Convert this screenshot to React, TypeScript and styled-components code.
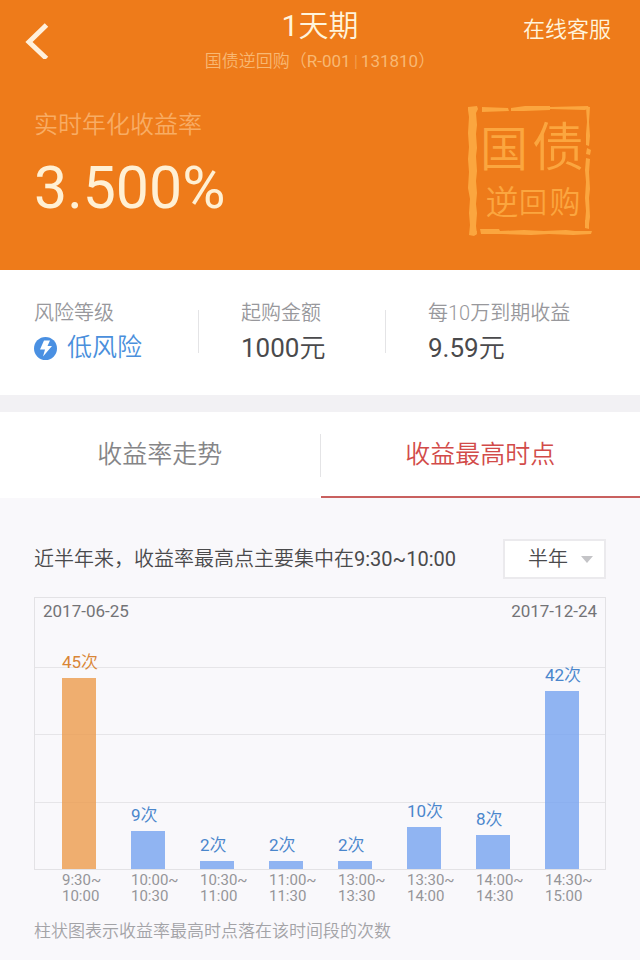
import React, { useState } from "react";
import styled, { createGlobalStyle } from "styled-components";

const GlobalStyle = createGlobalStyle`
  * {
    box-sizing: border-box;
  }
  body {
    margin: 0;
    background-color: #f9f8fb;
    font-family: Roboto, "Noto Sans CJK SC DemiLight", "Noto Sans CJK SC", sans-serif;
    color: #4a4a4c;
  }
  button, select {
    font-family: inherit;
  }
`;

const Hero = styled.header`
  background-color: #ee7b1a;
  padding: 5px 34px 33px;
`;

const NavBar = styled.div`
  display: grid;
  grid-template-columns: 1fr auto 1fr;
  align-items: center;
`;

const BackButton = styled.button`
  justify-self: start;
  margin-left: -12px;
  padding: 0;
  border: none;
  background: none;
  line-height: 0;
  cursor: pointer;
`;

const TitleBlock = styled.div`
  text-align: center;
`;

const MainTitle = styled.h1`
  margin: 0;
  font-size: 30px;
  line-height: 42px;
  font-weight: 400;
  color: #fff4dc;
`;

const ProductCode = styled.p`
  margin: 0;
  font-size: 17px;
  line-height: 28px;
  color: #f8b873;
`;

const CodeSeparator = styled.span`
  padding: 0 3px;
  color: #f39a48;
`;

const ServiceLink = styled.a`
  justify-self: end;
  align-self: start;
  margin-right: -5px;
  padding-top: 9px;
  font-size: 22px;
  line-height: 32px;
  color: #fff4dc;
  text-decoration: none;
`;

const RateRow = styled.div`
  display: flex;
  justify-content: space-between;
  align-items: flex-start;
  padding-top: 31px;
`;

const RateLabel = styled.div`
  margin-top: 2px;
  font-size: 24px;
  line-height: 34px;
  font-weight: 350;
  color: #f8ac64;
`;

const RateValue = styled.div`
  font-size: 59px;
  line-height: 92px;
  color: #fff0d4;
`;

const StampImage = styled.svg`
  flex: none;
  margin-right: 14px;
  font-family: "Noto Sans CJK SC", sans-serif;
  font-weight: 350;
`;

const Stats = styled.section`
  display: grid;
  grid-template-columns: 198fr 187fr 255fr;
  padding: 26px 0 29px;
  background-color: #fff;
`;

const Stat = styled.div<{ first?: boolean }>`
  display: flex;
  align-items: center;
  gap: 42px;
  padding-left: ${props => (props.first ? '34px' : '0')};
`;

const Divider = styled.span`
  flex: none;
  width: 1px;
  height: 43px;
  background-color: #e4e4e6;
`;

const StatLabel = styled.div`
  font-size: 20px;
  line-height: 34px;
  font-weight: 350;
  color: #98989c;
  white-space: nowrap;
`;

const StatValue = styled.div<{ highlight?: boolean }>`
  display: flex;
  align-items: center;
  gap: 10px;
  font-size: ${props => (props.highlight ? '25px' : '26px')};
  line-height: 36px;
  color: ${props => (props.highlight ? '#4a8fdc' : '#4a4a4c')};
  font-weight: ${props => (props.highlight ? 350 : 400)};
`;

const Tabs = styled.div`
  display: flex;
  align-items: center;
  margin-top: 17px;
  background-color: #fff;
  box-shadow: 0 -17px 0 #f2f1f4;
`;

const Tab = styled.button<{ active: boolean }>`
  flex: 1;
  height: 86px;
  padding: 0 0 4px;
  border: none;
  border-bottom: 2px solid ${props => (props.active ? '#c9605f' : '#fff')};
  background: none;
  font-size: 25px;
  font-weight: 350;
  color: ${props => (props.active ? '#d24b49' : '#858587')};
  cursor: pointer;
`;

const Panel = styled.main`
  padding: 41px 34px 16px;
`;

const PanelHeader = styled.div`
  display: flex;
  justify-content: space-between;
  align-items: center;
  margin-bottom: 18px;
`;

const Summary = styled.p`
  margin: 0;
  font-size: 20px;
  line-height: 30px;
`;

const RangeField = styled.label`
  display: grid;
  flex: none;
  width: 103px;
  height: 40px;
  align-items: center;

  & > * {
    grid-area: 1 / 1;
  }
`;

const RangeSelect = styled.select`
  width: 100%;
  height: 100%;
  padding: 0 0 0 23px;
  appearance: none;
  border: 2px solid #ebeaed;
  border-radius: 0;
  background-color: #fff;
  font-size: 20px;
  font-weight: 350;
  color: #4a4a4c;
`;

const Caret = styled.svg`
  justify-self: end;
  margin-right: 13px;
  pointer-events: none;
`;

const Plot = styled.div`
  display: grid;
  height: 273px;
  border: 1px solid #e3e2e5;

  & > * {
    grid-area: 1 / 1;
  }
`;

const GridLines = styled.div`
  display: grid;
  grid-template-rows: 35fr 34fr 34fr 33fr;
`;

const GridBand = styled.div`
  border-bottom: 1px solid #e6e5e8;

  &:last-child {
    border-bottom: none;
  }
`;

const DateRange = styled.div`
  display: flex;
  justify-content: space-between;
  padding: 0 8px;
  font-size: 17px;
  line-height: 26px;
  color: #737376;
`;

const Bars = styled.div`
  display: flex;
  justify-content: space-between;
  padding: 0 26px 0 27px;
`;

const BarColumn = styled.div`
  display: flex;
  flex-direction: column;
  justify-content: flex-end;
  width: 34px;
  white-space: nowrap;
`;

const BarCount = styled.span<{ peak: boolean }>`
  padding-bottom: 4px;
  font-size: 17px;
  line-height: 24px;
  color: ${props => (props.peak ? '#d98636' : '#4a86cc')};
`;

const Bar = styled.div<{ peak: boolean }>`
  flex: none;
  background-color: ${props => (props.peak ? 'rgba(236, 155, 76, 0.8)' : 'rgba(117, 163, 240, 0.8)')};
`;

const Ticks = styled.div`
  display: flex;
  justify-content: space-between;
  padding: 2px 27px 0 28px;
`;

const Tick = styled.span`
  width: 34px;
  font-size: 15px;
  line-height: 16px;
  color: #959599;
  white-space: nowrap;
`;

const Footnote = styled.p`
  margin: 14px 0 0;
  font-size: 17px;
  line-height: 26px;
  font-weight: 350;
  color: #a3a3a7;
`;

// Number of counts covered by the full height of the plot
const SCALE_MAX = 64;

const slots = [
  { from: '9:30', to: '10:00', count: 45 },
  { from: '10:00', to: '10:30', count: 9 },
  { from: '10:30', to: '11:00', count: 2 },
  { from: '11:00', to: '11:30', count: 2 },
  { from: '13:00', to: '13:30', count: 2 },
  { from: '13:30', to: '14:00', count: 10 },
  { from: '14:00', to: '14:30', count: 8 },
  { from: '14:30', to: '15:00', count: 42 },
];

const tabs = ['收益率走势', '收益最高时点'];

// Seal with a rough, hand-cut frame
const Stamp: React.FC = () => (
  <StampImage width="124" height="131" viewBox="0 0 124 131" fill="#fba63f">
    <path d="M0 1l9-1 1 3-2 4 1 12-1 9 1 14-1 8 1 15-1 10 1 12-1 11 1 9-1 13 1 8-3 2-5-1 1-10-1-12 1-14-2-11 1-16-1-13 1-12-1-14 1-16-1-7z" />
    <path d="M14 1l26 1 1 3-27 1zM43 2l14-2 25 0 0 4-26 1-13 0zM82 1l38-1 1 2-4 2-35-1z" />
    <path d="M118 1h4l-1 15 1 14-1 10-3-1 0-11 1-12zM119 42l4 2-1 5-4-1zM118 52l4 1-1 13 1 17-1 9 1 19-1 7-4-1 1-12-1-13 1-16-1-12zM117 114l4 1 0 8-4-1z" />
    <path d="M12 123l19 0 1 2 24-1 20 1 22-1 9 1 17 0-1 3-18 1-24-1-18 1-29-1-21 0zM3 126l6-1-1 4-4 0z" />
    <text x="36" y="60" fontSize="48" textAnchor="middle">国</text>
    <text x="90" y="60" fontSize="52" textAnchor="middle">债</text>
    <text x="34" y="108" fontSize="33" textAnchor="middle">逆</text>
    <text x="65" y="107" fontSize="28" textAnchor="middle">回</text>
    <text x="97" y="107" fontSize="31" textAnchor="middle">购</text>
  </StampImage>
);

// Component
const App: React.FC = () => {
  const [activeTab, setActiveTab] = useState<number>(1);
  const peak = Math.max(...slots.map(slot => slot.count));

  return (
    <>
      <GlobalStyle />
      <Hero>
        <NavBar>
          <BackButton aria-label="返回">
            <svg width="30" height="38" viewBox="0 0 30 38" fill="none" stroke="#fff0dc" strokeWidth="5">
              <path d="M24.500 4L7 21L24.500 37.500" />
            </svg>
          </BackButton>
          <TitleBlock>
            <MainTitle>1天期</MainTitle>
            <ProductCode>
              国债逆回购（R-001<CodeSeparator>|</CodeSeparator>131810）
            </ProductCode>
          </TitleBlock>
          <ServiceLink href="#service">在线客服</ServiceLink>
        </NavBar>
        <RateRow>
          <div>
            <RateLabel>实时年化收益率</RateLabel>
            <RateValue>3.500%</RateValue>
          </div>
          <Stamp />
        </RateRow>
      </Hero>

      <Stats>
        <Stat first>
          <div>
            <StatLabel>风险等级</StatLabel>
            <StatValue highlight>
              <svg width="23" height="23" viewBox="0 0 23 23">
                <circle cx="11.500" cy="11.500" r="11.500" fill="#4a90e2" />
                <path d="M10 3.500h6l-2.500 5.500h4.500L9 19.500l2-7H6z" fill="#fff" />
              </svg>
              低风险
            </StatValue>
          </div>
        </Stat>
        <Stat>
          <Divider />
          <div>
            <StatLabel>起购金额</StatLabel>
            <StatValue>1000元</StatValue>
          </div>
        </Stat>
        <Stat>
          <Divider />
          <div>
            <StatLabel>每10万到期收益</StatLabel>
            <StatValue>9.59元</StatValue>
          </div>
        </Stat>
      </Stats>

      <Tabs role="tablist">
        {tabs.map((tab, index) => (
          <React.Fragment key={tab}>
            {index > 0 && <Divider />}
            <Tab role="tab" active={index === activeTab} aria-selected={index === activeTab} onClick={() => setActiveTab(index)}>
              {tab}
            </Tab>
          </React.Fragment>
        ))}
      </Tabs>

      <Panel>
        <PanelHeader>
          <Summary>近半年来，收益率最高点主要集中在9:30~10:00</Summary>
          <RangeField>
            <RangeSelect aria-label="统计区间">
              <option>半年</option>
            </RangeSelect>
            <Caret width="12" height="7" viewBox="0 0 12 7">
              <path d="M0 0h12L6 7z" fill="#c4c4c7" />
            </Caret>
          </RangeField>
        </PanelHeader>

        <Plot>
          <GridLines>
            <GridBand />
            <GridBand />
            <GridBand />
            <GridBand />
          </GridLines>
          <DateRange>
            <span>2017-06-25</span>
            <span>2017-12-24</span>
          </DateRange>
          <Bars>
            {slots.map(slot => (
              <BarColumn key={slot.from}>
                <BarCount peak={slot.count === peak}>{slot.count}次</BarCount>
                <Bar peak={slot.count === peak} style={{ height: `${(slot.count / SCALE_MAX) * 100}%` }} />
              </BarColumn>
            ))}
          </Bars>
        </Plot>
        <Ticks>
          {slots.map(slot => (
            <Tick key={slot.from}>
              {slot.from}~<br />
              {slot.to}
            </Tick>
          ))}
        </Ticks>
        <Footnote>柱状图表示收益率最高时点落在该时间段的次数</Footnote>
      </Panel>
    </>
  );
};

export default App;
